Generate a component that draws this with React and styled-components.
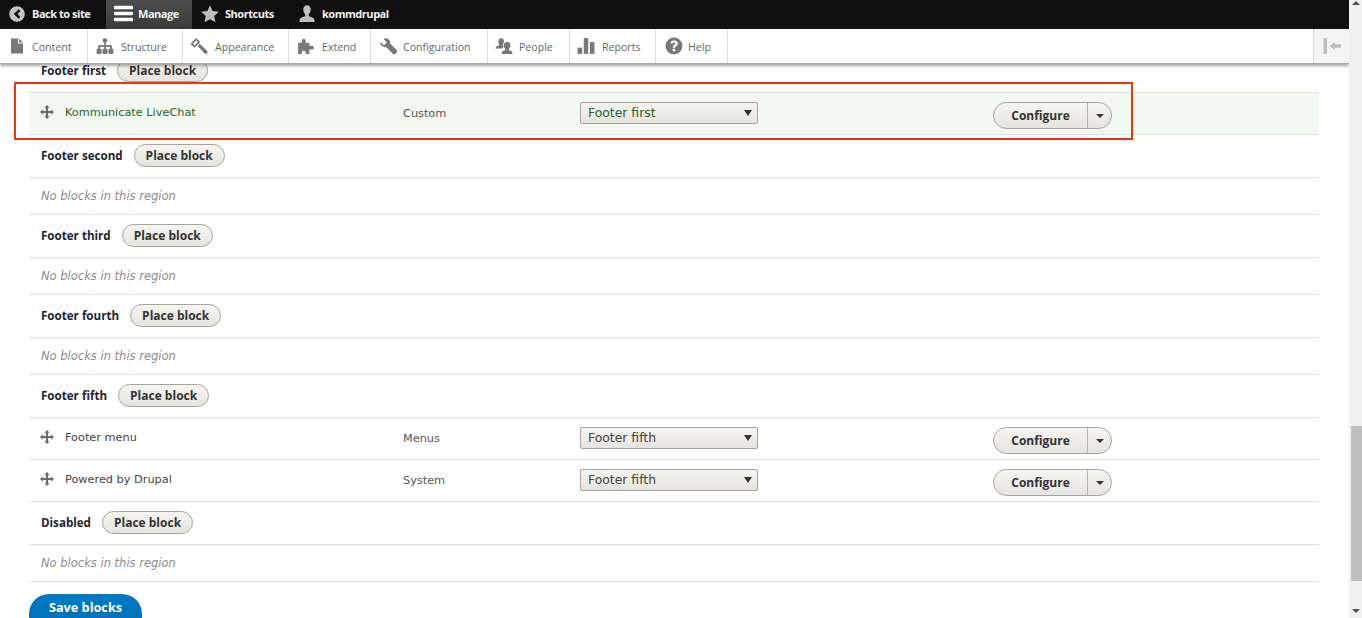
import React from 'react'
import styled, { createGlobalStyle } from 'styled-components'

const GlobalStyle = createGlobalStyle`
  html, body {
    margin: 0;
    padding: 0;
    height: 618px;
    overflow: hidden;
    background: #fff;
  }
`

const BODY_FONT = `"DejaVu Sans", "Noto Sans", sans-serif`
const HEAD_FONT = `"Open Sans", "Noto Sans", sans-serif`

const Page = styled.div`
  display: flex;
  height: 618px;
  width: 1362px;
  overflow: hidden;
  font-family: ${BODY_FONT};
`

const Viewport = styled.div`
  flex: 1;
  min-width: 0;
  display: flex;
  flex-direction: column;
  overflow: hidden;
`

const Toolbar = styled.header`
  position: relative;
  z-index: 2;
  flex: none;
  box-shadow: 0 2px 3px rgba(0, 0, 0, 0.35);
`

const BlackBar = styled.nav`
  display: flex;
  height: 29px;
  background: #0f0f0f;
`

const TopItem = styled.a`
  display: flex;
  align-items: center;
  box-sizing: border-box;
  width: ${p => p.$w}px;
  gap: ${p => p.$gap || 6}px;
  padding: 0 0 2px ${p => p.$pl || 9}px;
  color: #f2f2f2;
  font: 700 11px ${HEAD_FONT};
  letter-spacing: -0.47px;
  background: ${p => p.$active ? 'linear-gradient(#4e4e4e, #3a3a3a)' : 'transparent'};
`

const Tray = styled.nav`
  display: flex;
  height: 34px;
  background: #fff;
  border-bottom: 1px solid #a8a8a8;
`

const TrayItem = styled.a`
  display: flex;
  align-items: center;
  gap: ${p => p.$gap || 7}px;
  width: ${p => p.$w}px;
  box-sizing: border-box;
  padding: 2px 0 0 ${p => p.$pl || 8}px;
  border-right: 1px solid #dcdcdc;
  color: #666;
  font: 400 10.6px ${HEAD_FONT};
  svg {
    margin-top: -2px;
  }
`

const TrayFill = styled.div`
  flex: 1;
`

const TrayToggle = styled.div`
  width: 36px;
  box-sizing: border-box;
  display: flex;
  align-items: center;
  justify-content: center;
  background: #f4f4f4;
  border-left: 1px solid #d6d6d6;
`

const Content = styled.main`
  flex: 1;
  padding: 0 30px 0 29px;
  overflow: hidden;
`

const RegionRow = styled.div`
  display: flex;
  align-items: center;
  gap: 11px;
  height: 43px;
  box-sizing: border-box;
  padding: 0 0 2px 12px;
  margin-top: ${p => p.$clipped ? '-14px' : '0'};
  border-bottom: 1px solid #e2e1dc;
`

const RegionTitle = styled.span`
  color: #222330;
  font: 700 11.6px ${HEAD_FONT};
`

const PillButton = styled.button`
  height: 23px;
  padding: 0 11px;
  border: 1px solid #a6a49c;
  border-radius: 20px;
  background: linear-gradient(#f6f5f1, #e6e4de);
  color: #333;
  font: 700 12px ${HEAD_FONT};
`

const EmptyRow = styled.div`
  display: flex;
  align-items: center;
  height: 37px;
  box-sizing: border-box;
  padding-left: 12px;
  border-bottom: 1px solid #e2e1dc;
  color: #8d8d8d;
  font-size: 11.5px;
  font-style: italic;
`

const BlockRow = styled.div`
  display: grid;
  grid-template-columns: 36px 338px 177px 413px 1fr;
  align-items: center;
  height: 42px;
  box-sizing: border-box;
  border-bottom: 1px solid #e2e1dc;
  background: ${p => p.$green ? '#f2f9f0' : 'transparent'};
  color: ${p => p.$green ? '#2b5f2a' : '#444'};
  font-size: 11.3px;
`

const Handle = styled.span`
  display: flex;
  justify-content: center;
  margin-top: -4px;
`

const BlockName = styled.span`
  margin-top: -2px;
`

const Category = styled.span`
  color: #555;
  font-size: 11.3px;
`

const FakeSelect = styled.div`
  display: flex;
  align-items: center;
  justify-content: space-between;
  width: 178px;
  height: 22px;
  margin-top: -2px;
  box-sizing: border-box;
  padding: 0 5px 0 7px;
  border: 1px solid #a6a49c;
  border-radius: 2px;
  background: linear-gradient(#f5f4f0, #e6e4de);
  font-size: 12.4px;
  color: ${p => p.$green ? '#2b5f2a' : '#444'};
`

const Caret = styled.span`
  width: 0;
  height: 0;
  border-left: 4px solid transparent;
  border-right: 4px solid transparent;
  border-top: 6px solid #333;
`

const SplitButton = styled.div`
  display: flex;
  width: 119px;
  height: 27px;
  margin-top: 4px;
  box-sizing: border-box;
  border: 1px solid #a6a49c;
  border-radius: 14px;
  background: linear-gradient(#f6f5f1, #e6e4de);
  overflow: hidden;
`

const SplitLabel = styled.span`
  flex: 1;
  display: flex;
  align-items: center;
  justify-content: center;
  color: #333;
  font: 700 12px ${HEAD_FONT};
  border-right: 1px solid #b5b3ab;
`

const SplitToggle = styled.span`
  width: 23px;
  display: flex;
  align-items: center;
  justify-content: center;
  &::after {
    content: '';
    border-left: 4px solid transparent;
    border-right: 4px solid transparent;
    border-top: 4px solid #333;
  }
`

const SaveButton = styled.button`
  display: block;
  margin-top: 12px;
  width: 113px;
  height: 27px;
  padding: 0 0 2px;
  border: none;
  border-radius: 20px 20px 0 0;
  background: linear-gradient(#007bc6, #0071b8);
  color: #fff;
  font: 700 12.7px ${HEAD_FONT};
`

const Scrollbar = styled.div`
  position: relative;
  flex: none;
  width: 13px;
  background: #f0f0f0;
`

const ScrollArrow = styled.span`
  position: absolute;
  left: 3px;
  ${p => p.$down ? 'bottom: 5px;' : 'top: 1px;'}
  border-left: 4px solid transparent;
  border-right: 4px solid transparent;
  ${p => p.$down ? 'border-top: 4px solid #505050;' : 'border-bottom: 4px solid #505050;'}
`

const ScrollThumb = styled.span`
  position: absolute;
  top: 426px;
  left: 2px;
  right: 0;
  height: 155px;
  background: #bfbfbf;
`

const HighlightBox = styled.div`
  position: absolute;
  left: 14px;
  top: 82px;
  width: 1119px;
  height: 58px;
  box-sizing: border-box;
  border: 2px solid #f5300c;
  pointer-events: none;
`

const Icon = ({ size = 16, fill = '#787878', children }) => (
  <svg width={size} height={size} viewBox="0 0 16 16" fill={fill} style={{ flex: 'none' }}>{children}</svg>
)

const icons = {
  back: <Icon fill="#c4c4c4"><path fillRule="evenodd" d="M8 .2a7.800 7.800 0 1 0 0 15.600A7.800 7.800 0 0 0 8 .2zM9.600 3.200l1.800 1.800L8.400 8l3 3-1.800 1.800L4.800 8z" /></Icon>,
  menu: <Icon size={19} fill="#fff"><rect x="0" y="1.500" width="16" height="3" rx="1" /><rect x="0" y="6.500" width="16" height="3" rx="1" /><rect x="0" y="11.500" width="16" height="3" rx="1" /></Icon>,
  star: <Icon size={18} fill="#bebebe"><path d="M8 .2l2.300 5.200 5.600.6-4.200 3.800 1.200 5.600L8 12.600l-4.900 2.800 1.200-5.600L.1 6l5.600-.6z" /></Icon>,
  user: <Icon size={18} fill="#bebebe"><path d="M8 .3c2 0 3.300 1.500 3.300 3.800 0 1.700-.8 3.300-1.700 4.100v1.700c1.600.6 5 1.100 5 3.400V15H1.400v-1.700c0-2.300 3.400-2.800 5-3.400V8.200c-.9-.8-1.700-2.400-1.700-4.100C4.700 1.800 6 .3 8 .3z" /></Icon>,
  content: <Icon><path d="M2 .5h7v5h5v10H2z" /><path d="M10 .5l4 4h-4z" /></Icon>,
  structure: <Icon size={18}><rect x="6" y="1" width="4" height="4" rx="1.500" /><rect x="7.200" y="5" width="1.600" height="3" /><rect x="2" y="7.200" width="12" height="1.600" /><rect x="2" y="8" width="1.600" height="3" /><rect x="7.200" y="8" width="1.600" height="3" /><rect x="12.400" y="8" width="1.600" height="3" /><rect x="0.500" y="10.500" width="4.500" height="4.500" rx="1" /><rect x="5.750" y="10.500" width="4.500" height="4.500" rx="1" /><rect x="11" y="10.500" width="4.500" height="4.500" rx="1" /></Icon>,
  appearance: <Icon size={18}><path fillRule="evenodd" d="M5.500.8L.4 5.900l3.700 3.700 5.100-5.100zM5.500 3l1.500 1.500-2.900 2.900-1.500-1.500z" /><path d="M6.800 7.900l1.900-1.900 6.600 6.400c.5.500.5 1.300 0 1.800l-.5.500c-.5.500-1.300.5-1.800 0z" /></Icon>,
  extend: <Icon size={18}><path d="M1 5h3.500C3.800 3.500 4.500 1.500 6 1.500S8.200 3.500 7.500 5H11v3.200c1.500-.7 4-.4 4 1.300s-2.500 2-4 1.300V15H7.500c.7-1.500 0-2.800-1.500-2.800S3.800 13.500 4.500 15H1z" /></Icon>,
  config: <Icon size={18}><path d="M1.200 4.500L4.300 7.400 7 5 4 1.600C6.500.4 9.200 1.300 9.800 4.200c.1.500.1 1 0 1.500l5.800 5.800c.7.700.7 1.700 0 2.400l-.9.900c-.7.700-1.700.7-2.400 0L6.500 9C3.800 9.400.3 7.500 1.200 4.500z" /></Icon>,
  people: <Icon size={18}><path d="M5.500 1c1.500 0 2.500 1.100 2.500 2.700 0 1.100-.5 2.100-1.100 2.700v1.200c.4.200.9.300 1.300.5-.8.500-1.500 1.200-1.500 2.100H.5V9.500c0-1.200 2.100-1.500 3.100-1.900V6.400C3 5.800 3 4.800 3 3.700 3 2.100 4 1 5.500 1z" /><path d="M11 4.500c1.600 0 2.700 1.200 2.700 3 0 1.200-.5 2.200-1.200 2.900v1.300c1.200.4 3 .8 3 2.300v1H6v-1c0-1.500 1.800-1.900 3-2.300v-1.300c-.7-.7-1.200-1.700-1.200-2.900 0-1.800 1.100-3 2.700-3z" /></Icon>,
  reports: <Icon size={18}><rect x="0.500" y="9.500" width="4" height="5.500" /><rect x="6" y="1" width="4" height="14" /><rect x="11.500" y="4.500" width="4" height="10.500" /></Icon>,
  help: <Icon size={18}><path fillRule="evenodd" d="M8 .5a7.500 7.500 0 1 0 0 15 7.500 7.500 0 0 0 0-15zM8 3c2 0 3.400 1.100 3.400 2.800 0 1.300-.8 1.900-1.600 2.400-.6.400-.8.600-.8 1.300H7c-.1-1.300.3-2 1.100-2.500.7-.5 1.100-.7 1.100-1.200 0-.5-.5-.9-1.200-.9-.8 0-1.300.4-1.500 1.200L4.600 5.300C5 3.900 6.200 3 8 3zM6.900 10.400h2.200v2.200H6.900z" /></Icon>,
  collapse: <Icon size={18} fill="#bdbdbd"><rect x="0.500" y="1" width="3" height="14" /><path d="M6 8l4.500-3.500V6.500H16v3h-5.500v2z" /></Icon>,
  drag: <Icon size={14} fill="#6b6b6b"><path d="M8 0l3 3.200H9.200v3.600h3.600V5l3.200 3-3.200 3V9.200H9.200v3.600H11L8 16l-3-3.200h1.800V9.200H3.200V11L0 8l3.200-3v1.800h3.600V3.200H5z" /></Icon>,
}

const Block = ({ name, category, region, green }) => (
  <BlockRow $green={green}>
    <Handle>{icons.drag}</Handle>
    <BlockName>{name}</BlockName>
    <Category>{category}</Category>
    <div>
      <FakeSelect $green={green}>{region}<Caret /></FakeSelect>
    </div>
    <SplitButton>
      <SplitLabel>Configure</SplitLabel>
      <SplitToggle />
    </SplitButton>
  </BlockRow>
)

const Region = ({ title, clipped }) => (
  <RegionRow $clipped={clipped}>
    <RegionTitle>{title}</RegionTitle>
    <PillButton>Place block</PillButton>
  </RegionRow>
)

const Empty = () => <EmptyRow>No blocks in this region</EmptyRow>

export default function App() {
  return (
    <Page>
      <GlobalStyle />
      <Viewport>
        <Toolbar>
          <BlackBar>
            <TopItem $w={106} $gap={7}>{icons.back}Back to site</TopItem>
            <TopItem $active $w={86} $pl={8} $gap={5}>{icons.menu}Manage</TopItem>
            <TopItem $w={97}>{icons.star}Shortcuts</TopItem>
            <TopItem $w={110}>{icons.user}kommdrupal</TopItem>
          </BlackBar>
          <Tray>
            <TrayItem $w={88} $pl={9}>{icons.content}Content</TrayItem>
            <TrayItem $w={95}>{icons.structure}Structure</TrayItem>
            <TrayItem $w={106} $pl={7}>{icons.appearance}Appearance</TrayItem>
            <TrayItem $w={82}>{icons.extend}Extend</TrayItem>
            <TrayItem $w={117} $gap={6}>{icons.config}Configuration</TrayItem>
            <TrayItem $w={82} $pl={7} $gap={6}>{icons.people}People</TrayItem>
            <TrayItem $w={86} $pl={7}>{icons.reports}Reports</TrayItem>
            <TrayItem $w={72} $pl={9} $gap={5}>{icons.help}Help</TrayItem>
            <TrayFill />
            <TrayToggle>{icons.collapse}</TrayToggle>
          </Tray>
        </Toolbar>
        <Content>
          <Region clipped title="Footer first" />
          <Block green name="Kommunicate LiveChat" category="Custom" region="Footer first" />
          <Region title="Footer second" />
          <Empty />
          <Region title="Footer third" />
          <Empty />
          <Region title="Footer fourth" />
          <Empty />
          <Region title="Footer fifth" />
          <Block name="Footer menu" category="Menus" region="Footer fifth" />
          <Block name="Powered by Drupal" category="System" region="Footer fifth" />
          <Region title="Disabled" />
          <Empty />
          <SaveButton>Save blocks</SaveButton>
        </Content>
      </Viewport>
      <Scrollbar>
        <ScrollArrow />
        <ScrollThumb />
        <ScrollArrow $down />
      </Scrollbar>
      <HighlightBox />
    </Page>
  )
}
